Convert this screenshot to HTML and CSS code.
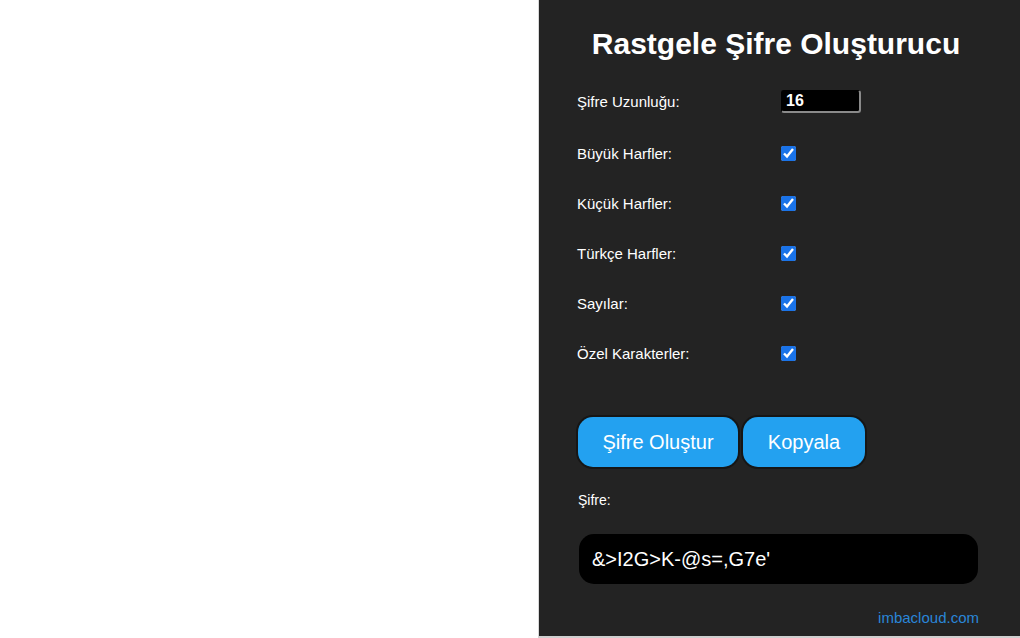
FILE: index.html
```html
<!DOCTYPE html>
<html lang="tr">
<head>
<meta charset="utf-8">
<title>Rastgele Şifre Oluşturucu</title>
<link rel="stylesheet" href="styles.css">
</head>
<body>
<div class="page">
  <div class="blank"></div>
  <main class="panel">
    <div class="content">
      <h1 class="title">Rastgele Şifre Oluşturucu</h1>
      <div class="options">
        <label class="opt-label" for="len">Şifre Uzunluğu:</label>
        <div class="opt-ctrl"><input id="len" class="len-input" type="number" value="16"></div>
        <label class="opt-label" for="c1">Büyük Harfler:</label>
        <div class="opt-ctrl"><input id="c1" class="chk" type="checkbox" checked></div>
        <label class="opt-label" for="c2">Küçük Harfler:</label>
        <div class="opt-ctrl"><input id="c2" class="chk" type="checkbox" checked></div>
        <label class="opt-label" for="c3">Türkçe Harfler:</label>
        <div class="opt-ctrl"><input id="c3" class="chk" type="checkbox" checked></div>
        <label class="opt-label" for="c4">Sayılar:</label>
        <div class="opt-ctrl"><input id="c4" class="chk" type="checkbox" checked></div>
        <label class="opt-label" for="c5">Özel Karakterler:</label>
        <div class="opt-ctrl"><input id="c5" class="chk" type="checkbox" checked></div>
      </div>
      <div class="buttons">
        <button class="btn btn-gen">Şifre Oluştur</button>
        <button class="btn btn-copy">Kopyala</button>
      </div>
      <div class="pw-label">Şifre:</div>
      <div class="pw-box">&amp;&gt;I2G&gt;K-@s=,G7e'</div>
      <div class="footer"><a class="link" href="#">imbacloud.com</a></div>
    </div>
  </main>
</div>
</body>
</html>
```
FILE: styles.css
```css
html, body {
  margin: 0;
  padding: 0;
  background: #ffffff;
  overflow: hidden;
}
body {
  font-family: "Liberation Sans", Arial, sans-serif;
}
.page {
  display: flex;
  width: 1020px;
  height: 638px;
}
.blank {
  width: 538px;
  flex: none;
  background: #ffffff;
}
.panel {
  flex: 1;
  background: #232323;
  border-left: 1px solid #d8d8d8;
  height: 636px;
  border-bottom: 2px solid #cfcfcf;
}
.content {
  width: 402px;
  margin-left: 38px;
  display: flex;
  flex-direction: column;
}
.title {
  margin: 28px 0 0 -4px;
  font-size: 30px;
  font-weight: bold;
  color: #ffffff;
  text-align: center;
  line-height: 32px;
}
.options {
  margin-top: 14px;
  display: grid;
  grid-template-columns: 204px 1fr;
  grid-template-rows: 54px repeat(5, 50px);
}
.opt-label {
  display: flex;
  align-items: center;
  font-size: 15px;
  color: #ffffff;
}
.opt-ctrl {
  display: flex;
  align-items: center;
}
.len-input {
  height: 23px;
  box-sizing: border-box;
  width: 80px;
  padding: 0 4px;
  margin: 0;
  background: #000000;
  color: #ffffff;
  font-family: "Liberation Sans", Arial, sans-serif;
  font-size: 16px;
  font-weight: 600;
  border: 1px solid #000000;
  border-right: 2px solid #8a8a8a;
  border-bottom: 2px solid #8a8a8a;
  border-radius: 3px;
  outline: none;
  -moz-appearance: textfield;
}
.len-input::-webkit-inner-spin-button,
.len-input::-webkit-outer-spin-button {
  -webkit-appearance: none;
  margin: 0;
}
.chk {
  width: 15px;
  height: 15px;
  margin: 0;
  accent-color: #1a73e8;
}
.buttons {
  display: flex;
  gap: 5px;
  margin-top: 39px;
  margin-left: 1px;
}
.btn {
  height: 50px;
  border: none;
  border-radius: 15px;
  background: #23a1f0;
  color: #ffffff;
  font-family: "Liberation Sans", Arial, sans-serif;
  font-size: 20px;
  padding: 0;
  box-shadow: 0 0 0 2px #161616;
  cursor: pointer;
}
.btn-gen {
  width: 160px;
}
.btn-copy {
  width: 122px;
}
.pw-label {
  margin-top: 25px;
  margin-left: 1px;
  font-size: 14px;
  color: #ffffff;
  line-height: 16px;
}
.pw-box {
  margin-top: 26px;
  margin-left: 2px;
  width: 399px;
  height: 50px;
  box-sizing: border-box;
  background: #000000;
  border-radius: 15px;
  color: #ffffff;
  font-size: 20px;
  display: flex;
  align-items: center;
  padding-left: 13px;
}
.footer {
  display: flex;
  justify-content: flex-end;
  margin-top: 26px;
}
.link {
  color: #2a86d8;
  font-size: 15px;
  text-decoration: none;
  line-height: 16px;
}
```
